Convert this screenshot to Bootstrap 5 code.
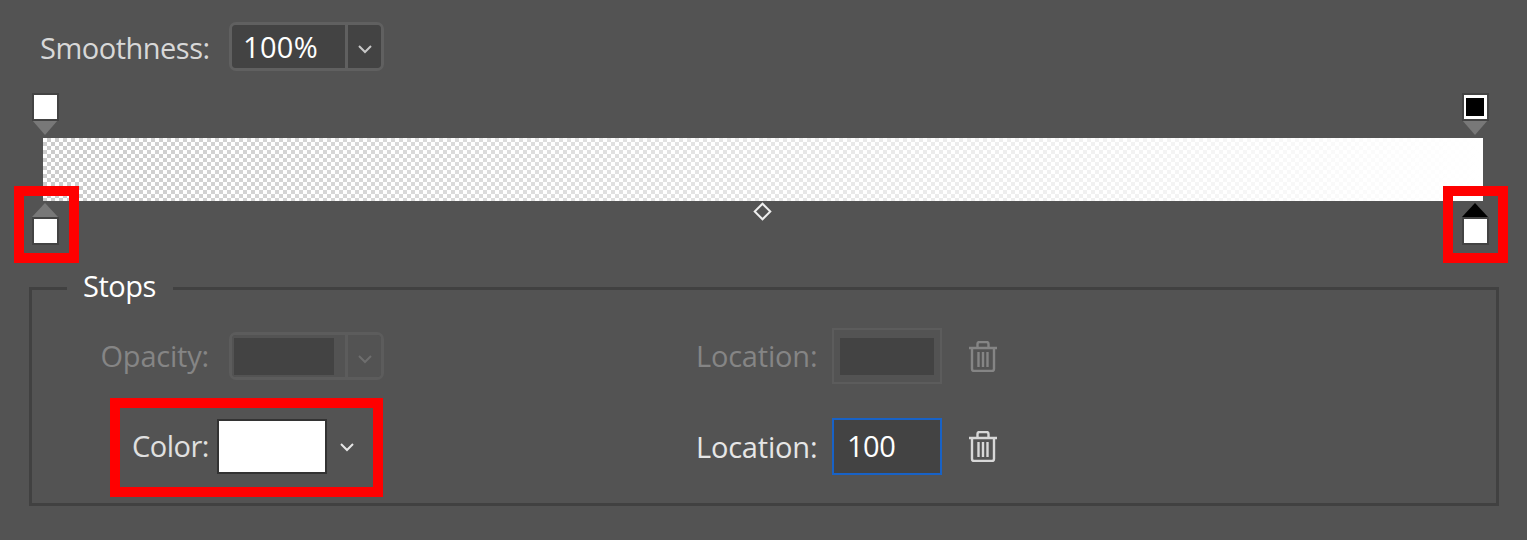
<!DOCTYPE html>
<html lang="en">
<head>
  <meta charset="UTF-8">
  <title>Gradient Editor</title>
  <link href="https://cdn.jsdelivr.net/npm/bootstrap@5.3.3/dist/css/bootstrap.min.css" rel="stylesheet">
  <style>
    body { background: #535353; color: #e6e6e6; font-family: "Open Sans", "Noto Sans", sans-serif; font-size: 29px; letter-spacing: -0.5px; width: 1527px; height: 540px; overflow: hidden; }
    .top-row { padding: 22px 0 0 40px; height: 93px; }
    .top-label { width: 189px; height: 52px; color: #d8d8d8; line-height: 52px; }
    .combo { width: 155px; height: 49px; border: 3px solid #606060; border-radius: 7px; }
    .combo-value { width: 116px; background: #434343; color: #fff; padding-left: 11px; border-right: 3px solid #606060; line-height: 43px; border-radius: 4px 0 0 4px; letter-spacing: 0.3px; }
    .combo-arrow { flex: 1; background: #434343; border-radius: 0 4px 4px 0; padding-top: 5px; }
    .ramp-wrap { height: 194px; position: relative; }
    .ramp { position: absolute; left: 43px; top: 45px; width: 1440px; height: 63px;
      background: linear-gradient(90deg, rgba(255,255,255,0), #fff),
        repeating-conic-gradient(#cccccc 0 25%, #fff 0 50%) 0 0 / 8px 8px; }
    .stop { position: absolute; width: 27px; height: 28px; border: 2px solid #434343; background: #fff; }
    .stop-inner { display: block; width: 18px; height: 18px; margin: 3px 2px; background: #000; }
    .tri { position: absolute; width: 0; height: 0; border-left: 13.5px solid transparent; border-right: 13.5px solid transparent; }
    .tri-down { top: 27px; border-top: 15px solid #787878; }
    .tri-up { top: 110px; border-bottom: 14px solid #787878; }
    .tri-black { border-bottom-color: #000; }
    .mid-diamond { position: absolute; left: 755.5px; top: 112px; width: 13px; height: 13px; border: 2px solid #eee; transform: rotate(45deg); }
    .stops-box { margin: 0 28px 0 29px; height: 219px; border: 3px solid #414141; position: relative; }
    .stops-title { position: absolute; left: 35px; top: -22px; padding: 0 17px 0 16px; background: #535353; color: #fff; line-height: 36px; }
    .stops-body { padding-top: 21px; }
    .line-a { height: 90px; }
    .line-b { height: 91px; }
    .stops-left { width: 352px; gap: 20px; letter-spacing: -0.2px; }
    .stops-right { margin-left: 312px; gap: 27px; }
    .loc-label { width: 119px; text-align: right; color: #e6e6e6; letter-spacing: -0.2px; white-space: nowrap; }
    .loc-box { width: 110px; height: 57px; margin-left: 17px; border: 2px solid #1862c6; background: #434343; color: #fff; padding-left: 13px; line-height: 51px; }
    .is-off { color: #858585; }
    .is-off .loc-label { color: #858585; }
    .is-off .loc-box { height: 56px; border-color: #5c5c5c; background: #535353; padding: 8px 6px; }
    .is-off .loc-box span { display: block; height: 37px; background: #434343; }
    .is-off .combo { height: 48px; border-color: #5c5c5c; }
    .is-off .combo-value { background: #535353; padding: 3px 11px 0 2px; border-color: #5c5c5c; }
    .is-off .combo-value span { display: block; height: 37px; background: #434343; }
    .is-off .combo-arrow { background: #535353; }
    .color-swatch { width: 110px; height: 55px; background: #fff; border: 2px solid #333; }
    .color-left { padding-left: 100px; width: 352px; }
    .color-label { width: 85px; color: #e0e0e0; line-height: 1; padding-bottom: 2px; }
    .color-chev { margin-left: 12px; }
    .hl { position: absolute; border: 10px solid #ff0000; }
    .hl-a { left: 14px; top: 186px; width: 65px; height: 77px; }
    .hl-b { left: 1443px; top: 186px; width: 65px; height: 77px; }
    .hl-c { left: 110px; top: 398px; width: 273px; height: 99px; }
  </style>
</head>
<body>
  <div class="d-flex align-items-start top-row">
    <span class="top-label">Smoothness:</span>
    <div class="d-flex combo">
      <div class="combo-value">100%</div>
      <div class="combo-arrow d-flex align-items-center justify-content-center">
        <svg width="16" height="10" viewBox="0 0 16 10"><path d="M2 2l6 6 6-6" fill="none" stroke="#c8c8c8" stroke-width="2"/></svg>
      </div>
    </div>
  </div>

  <div class="ramp-wrap">
    <div class="ramp"></div>
    <div class="tri tri-down" style="left:32px"></div>
    <div class="stop" style="left:32px;top:0"></div>
    <div class="tri tri-down" style="left:1462px"></div>
    <div class="stop" style="left:1462px;top:0"><span class="stop-inner"></span></div>
    <div class="mid-diamond"></div>
    <div class="tri tri-up" style="left:32px"></div>
    <div class="stop" style="left:32px;top:124px"></div>
    <div class="tri tri-up tri-black" style="left:1462px"></div>
    <div class="stop" style="left:1462px;top:124px"></div>
  </div>

  <div class="stops-box">
    <div class="stops-title">Stops</div>
    <div class="stops-body">
      <div class="d-flex align-items-center line-a is-off">
        <div class="d-flex align-items-center justify-content-end stops-left">
          <span>Opacity:</span>
          <div class="d-flex combo">
            <div class="combo-value"><span></span></div>
            <div class="combo-arrow d-flex align-items-center justify-content-center">
              <svg width="16" height="10" viewBox="0 0 16 10"><path d="M2 2l6 6 6-6" fill="none" stroke="#6e6e6e" stroke-width="2"/></svg>
            </div>
          </div>
        </div>
        <div class="d-flex align-items-center stops-right">
          <div class="d-flex align-items-center">
            <span class="loc-label">Location:</span>
            <div class="loc-box"><span></span></div>
          </div>
          <svg width="28" height="31" viewBox="0 0 28 31" fill="none" stroke="#858585" stroke-width="2.4"><path d="M0 7h28M8.500 7V3a2 2 0 0 1 2-2h7a2 2 0 0 1 2 2v4M3 7v21a2 2 0 0 0 2 2h18a2 2 0 0 0 2-2V7M9.500 11v15M14 11v15M18.500 11v15"/></svg>
        </div>
      </div>
      <div class="d-flex align-items-center line-b">
        <div class="d-flex align-items-center color-left">
          <span class="text-nowrap color-label">Color:</span>
          <div class="color-swatch"></div>
          <svg class="color-chev" width="16" height="10" viewBox="0 0 16 10"><path d="M2 2l6 6 6-6" fill="none" stroke="#e6e6e6" stroke-width="2"/></svg>
        </div>
        <div class="d-flex align-items-center stops-right">
          <div class="d-flex align-items-center">
            <span class="loc-label">Location:</span>
            <div class="loc-box">100</div>
          </div>
          <svg width="28" height="31" viewBox="0 0 28 31" fill="none" stroke="#d8d8d8" stroke-width="2.4"><path d="M0 7h28M8.500 7V3a2 2 0 0 1 2-2h7a2 2 0 0 1 2 2v4M3 7v21a2 2 0 0 0 2 2h18a2 2 0 0 0 2-2V7M9.500 11v15M14 11v15M18.500 11v15"/></svg>
        </div>
      </div>
    </div>
  </div>

  <div class="hl hl-a"></div>
  <div class="hl hl-b"></div>
  <div class="hl hl-c"></div>
  <script src="https://cdn.jsdelivr.net/npm/bootstrap@5.3.3/dist/js/bootstrap.bundle.min.js"></script>
</body>
</html>
